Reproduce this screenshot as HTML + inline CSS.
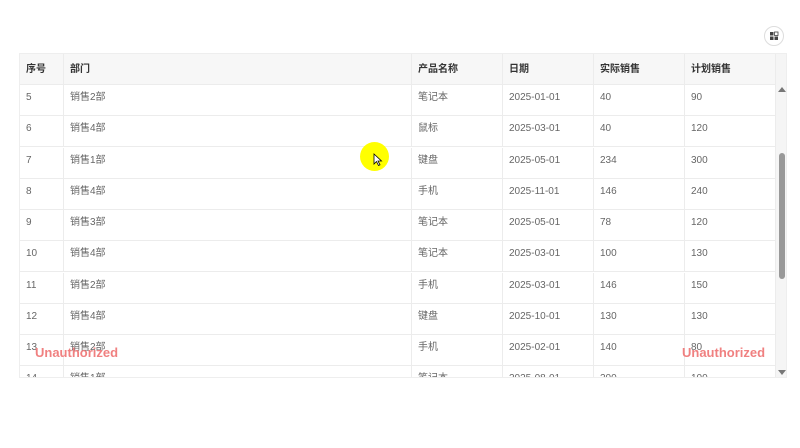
<!DOCTYPE html><html><head><meta charset="utf-8"><style>
body{margin:0;width:800px;height:448px;background:#fff;font-family:"Liberation Sans","Noto Sans CJK SC",sans-serif;position:relative;overflow:hidden}
.wrap{position:absolute;left:19px;top:53px;width:768px;height:325px;overflow:hidden;border:1px solid #eee;box-sizing:border-box;background:#fff}
.r{position:absolute;left:0;width:756px;height:31px;border-bottom:1px solid #ececec;box-sizing:border-box}
.r div{position:absolute;top:0;height:100%;line-height:25px;font-size:10px;color:#666;padding-left:6px;border-right:1px solid #ececec;box-sizing:border-box;white-space:nowrap}
.h{background:#f7f7f7}
.h div{font-weight:bold;color:#333;line-height:32px}
.c1{left:0;width:44px}.c2{left:44px;width:348px}.c3{left:392px;width:91px}.c4{left:483px;width:91px}.c5{left:574px;width:91px}.c6{left:665px;width:91px}
.sb{position:absolute;left:755px;top:0;width:12px;height:325px;background:#f5f5f5;border-left:1px solid #ececec}
.thumb{position:absolute;left:3px;top:99px;width:6px;height:126px;background:#999;border-radius:3px}
.ua{position:absolute;top:345px;font-size:13px;font-weight:bold;color:#f08080}
</style></head><body>
<div style="position:absolute;left:764px;top:26px;width:20px;height:20px;border-radius:50%;border:1px solid #ddd;box-sizing:border-box">
<svg width="20" height="20" style="position:absolute;left:-1px;top:-1px"><rect x="6" y="6" width="3.5" height="3.5" fill="#444"/><rect x="10.5" y="6" width="3.5" height="3.5" fill="none" stroke="#444" stroke-width="0.8"/><rect x="6" y="10.5" width="3.5" height="3.5" fill="#444"/><rect x="10.5" y="10.5" width="3.5" height="3.5" fill="#444"/></svg></div>
<div class="wrap">
<div class="r h" style="top:0"><div class="c1">序号</div><div class="c2">部门</div><div class="c3">产品名称</div><div class="c4">日期</div><div class="c5">实际销售</div><div class="c6">计划销售</div></div>
<div class="r" style="top:31px"><div class="c1">5</div><div class="c2">销售2部</div><div class="c3">笔记本</div><div class="c4">2025-01-01</div><div class="c5">40</div><div class="c6">90</div></div>
<div class="r" style="top:62.25px"><div class="c1">6</div><div class="c2">销售4部</div><div class="c3">鼠标</div><div class="c4">2025-03-01</div><div class="c5">40</div><div class="c6">120</div></div>
<div class="r" style="top:93.5px"><div class="c1">7</div><div class="c2">销售1部</div><div class="c3">键盘</div><div class="c4">2025-05-01</div><div class="c5">234</div><div class="c6">300</div></div>
<div class="r" style="top:124.75px"><div class="c1">8</div><div class="c2">销售4部</div><div class="c3">手机</div><div class="c4">2025-11-01</div><div class="c5">146</div><div class="c6">240</div></div>
<div class="r" style="top:156px"><div class="c1">9</div><div class="c2">销售3部</div><div class="c3">笔记本</div><div class="c4">2025-05-01</div><div class="c5">78</div><div class="c6">120</div></div>
<div class="r" style="top:187.25px"><div class="c1">10</div><div class="c2">销售4部</div><div class="c3">笔记本</div><div class="c4">2025-03-01</div><div class="c5">100</div><div class="c6">130</div></div>
<div class="r" style="top:218.5px"><div class="c1">11</div><div class="c2">销售2部</div><div class="c3">手机</div><div class="c4">2025-03-01</div><div class="c5">146</div><div class="c6">150</div></div>
<div class="r" style="top:249.75px"><div class="c1">12</div><div class="c2">销售4部</div><div class="c3">键盘</div><div class="c4">2025-10-01</div><div class="c5">130</div><div class="c6">130</div></div>
<div class="r" style="top:281px"><div class="c1">13</div><div class="c2">销售2部</div><div class="c3">手机</div><div class="c4">2025-02-01</div><div class="c5">140</div><div class="c6">80</div></div>
<div class="r" style="top:312.25px"><div class="c1">14</div><div class="c2">销售1部</div><div class="c3">笔记本</div><div class="c4">2025-08-01</div><div class="c5">200</div><div class="c6">100</div></div>
<div class="sb"><div style="position:absolute;left:2px;top:33px;width:0;height:0;border-left:4px solid transparent;border-right:4px solid transparent;border-bottom:5px solid #777"></div><div class="thumb"></div><div style="position:absolute;left:2px;top:316px;width:0;height:0;border-left:4px solid transparent;border-right:4px solid transparent;border-top:5px solid #777"></div></div>
</div>
<div style="position:absolute;left:360px;top:142px;width:29px;height:29px;border-radius:50%;background:#ffff00"></div>
<svg style="position:absolute;left:373px;top:153px" width="10" height="14"><path d="M1 1 L1 11 L3.5 8.5 L5.5 12.5 L7 11.8 L5 8 L8.5 8 Z" fill="#fff" stroke="#000" stroke-width="0.8"/></svg>
<div class="ua" style="left:35px">Unauthorized</div>
<div class="ua" style="left:682px">Unauthorized</div>
</body></html>
